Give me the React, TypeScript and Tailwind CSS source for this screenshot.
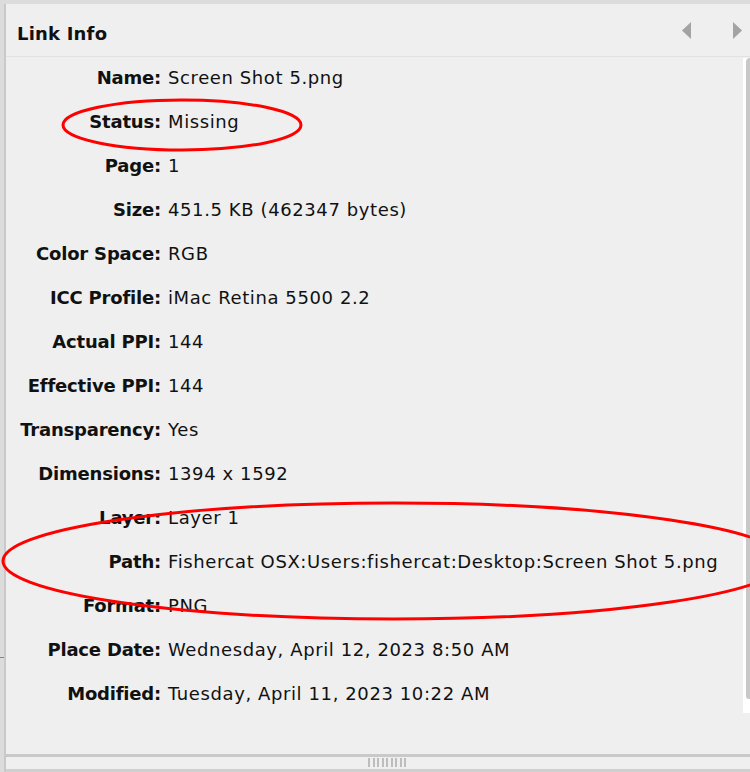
const rows: [string, string][] = [
  ["Name", "Screen Shot 5.png"],
  ["Status", "Missing"],
  ["Page", "1"],
  ["Size", "451.5 KB (462347 bytes)"],
  ["Color Space", "RGB"],
  ["ICC Profile", "iMac Retina 5500 2.2"],
  ["Actual PPI", "144"],
  ["Effective PPI", "144"],
  ["Transparency", "Yes"],
  ["Dimensions", "1394 x 1592"],
  ["Layer", "Layer 1"],
  ["Path", "Fishercat OSX:Users:fishercat:Desktop:Screen Shot 5.png"],
  ["Format", "PNG"],
  ["Place Date", "Wednesday, April 12, 2023 8:50 AM"],
  ["Modified", "Tuesday, April 11, 2023 10:22 AM"],
];

function Triangle({ dir }: { dir: "left" | "right" }) {
  return (
    <svg width="10" height="17" viewBox="0 0 10 17">
      {dir === "left" ? (
        <polygon points="9,0 9,17 0,8.5" fill="#a3a3a3" />
      ) : (
        <polygon points="1,0 1,17 10,8.5" fill="#a3a3a3" />
      )}
    </svg>
  );
}

export default function App() {
  return (
    <div
      className="relative w-[750px] h-[772px] overflow-hidden bg-[#efefef] text-[#111] flex flex-col"
      style={{ fontFamily: '"DejaVu Sans", Verdana, sans-serif' }}
    >
      <div className="h-[4px] bg-[#dcdcdc] shrink-0" />
      <div className="flex flex-1 min-h-0">
        {/* left window edge */}
        <div className="w-[4px] bg-[#dcdcdc] shrink-0" />
        <div className="w-[2px] bg-[#c9c9c9] shrink-0" />

        <div className="flex-1 flex flex-col min-w-0">
          <div className="h-[53px] shrink-0 flex items-center justify-between pl-[11px] pr-[8px] pt-[6px] border-b border-[#e2e2e2]">
            <span className="text-[18px] font-bold tracking-[0.2px]">Link Info</span>
            <div className="flex items-center gap-[40px] -mt-[5px]">
              <Triangle dir="left" />
              <Triangle dir="right" />
            </div>
          </div>

          <div className="flex flex-1 min-h-0">
            <div className="flex-1 flex flex-col -mt-[2px]">
              {rows.map(([label, value]) => (
                <div key={label} className="h-[44px] flex items-center text-[18px] whitespace-nowrap">
                  <span className="w-[155px] text-right font-bold tracking-[-0.2px]">{label}:</span>
                  <span className="pl-[7px] tracking-[0.6px]">{value}</span>
                </div>
              ))}
            </div>
            {/* scrollbar */}
            <div className="w-[7px] shrink-0 pt-[1px]">
              <div className="h-[655px] bg-white pl-[3px] pb-[14px]">
                <div className="h-full bg-[#c8c8c8] rounded-tl-[5px] rounded-bl-[3px]" />
              </div>
            </div>
          </div>

          {/* bottom resize strip */}
          <div className="h-[3px] bg-[#c9c9c9] shrink-0" />
          <div className="h-[12px] shrink-0 flex justify-center pt-[1px]">
            <div className="flex gap-[2.5px] h-[9px] ml-[18px]">
              {[0, 1, 2, 3, 4, 5, 6, 7, 8].map((i) => (
                <div key={i} className="w-[2px] bg-[#bdbdbd]" />
              ))}
            </div>
          </div>
          <div className="h-[3px] bg-[#cfcfcf] shrink-0" />
        </div>
      </div>

      <div className="absolute left-0 top-[657px] w-[4px] h-[1px] bg-[#d44fd4]" />

      <svg className="absolute inset-0 pointer-events-none" width="750" height="772">
        <ellipse cx="182" cy="125" rx="119" ry="25" fill="none" stroke="#ff0000" strokeWidth="3" />
        <ellipse cx="394" cy="561" rx="391" ry="58" fill="none" stroke="#ff0000" strokeWidth="3" />
      </svg>
    </div>
  );
}
